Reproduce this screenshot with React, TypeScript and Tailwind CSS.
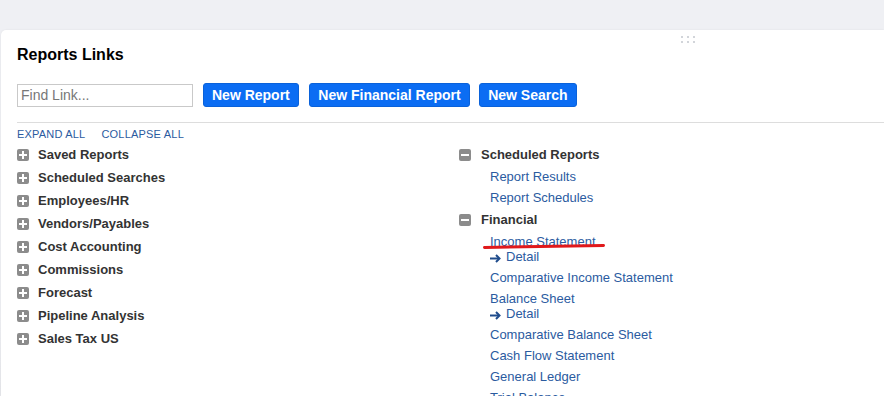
import React from "react";

function Box({ minus }: { minus?: boolean }) {
  return (
    <span className="relative inline-block w-[12px] h-[12px] rounded-[2px] bg-[#8c8c8c] shrink-0">
      <span className="absolute left-[2px] top-[5px] w-[8px] h-[2px] bg-white" />
      {!minus && <span className="absolute left-[5px] top-[2px] w-[2px] h-[8px] bg-white" />}
    </span>
  );
}

function Group({ label, minus }: { label: string; minus?: boolean }) {
  return (
    <div className="h-[23px] flex items-center">
      <Box minus={minus} />
      <span className={`${minus ? "ml-[10px]" : "ml-[9px]"} text-[13px] font-bold text-[#333333] leading-[23px]`}>{label}</span>
    </div>
  );
}

function Link({ label }: { label: string }) {
  return (
    <div className="h-[21px] leading-[21px] pl-[31px] text-[13px] text-[#2b5b9f]">{label}</div>
  );
}

function Detail() {
  return (
    <div className="h-[21px] mt-[-6px] flex items-center pl-[31px] text-[13px] text-[#2b5b9f]">
      <svg width="11" height="9" viewBox="0 0 11 9" className="mt-[3px]">
        <path d="M0 4.5 H9" stroke="#1f4c8c" strokeWidth="2" />
        <path d="M6 1 L9.5 4.5 L6 8" stroke="#1f4c8c" strokeWidth="2" fill="none" />
      </svg>
      <span className="ml-[5px]">Detail</span>
    </div>
  );
}

export default function App() {
  const left = [
    "Saved Reports",
    "Scheduled Searches",
    "Employees/HR",
    "Vendors/Payables",
    "Cost Accounting",
    "Commissions",
    "Forecast",
    "Pipeline Analysis",
    "Sales Tax US",
  ];
  return (
    <div className="w-[884px] h-[396px] overflow-hidden bg-gradient-to-b from-[#eff0f4] from-[80%] to-[#e7e8ec] pt-[30px] pl-px font-['Liberation_Sans',Arial,sans-serif]">
      <div className="relative bg-white rounded-tl-[5px] h-[366px] pl-[16px] pt-[15px] shadow-[0_0_2px_rgba(0,0,0,0.08)]">
        <div className="absolute left-[680px] top-[6px] grid grid-cols-3 gap-x-[4px] gap-y-[3px]">
          {[0, 1, 2, 3, 4, 5].map((i) => (
            <span key={i} className="w-[2px] h-[2px] bg-[#d2d5da]" />
          ))}
        </div>
        <h1 className="text-[16px] font-bold leading-[20px] text-black">Reports Links</h1>
        <div className="mt-[18px] flex items-center h-[24px]">
          <input
            placeholder="Find Link..."
            className="w-[176px] h-[23px] border border-[#c9c9c9] px-[3px] text-[14px] text-[#333] placeholder:text-[#777] outline-none"
          />
          <button className="ml-[10px] h-[24px] px-[8px] rounded-[3px] bg-[#0b6df3] border border-[#0a62da] text-white text-[14px] font-bold leading-none">
            New Report
          </button>
          <button className="ml-[10px] h-[24px] px-[8.5px] rounded-[3px] bg-[#0b6df3] border border-[#0a62da] text-white text-[14px] font-bold leading-none">
            New Financial Report
          </button>
          <button className="ml-[8.5px] h-[24px] px-[8.5px] rounded-[3px] bg-[#0b6df3] border border-[#0a62da] text-white text-[14px] font-bold leading-none">
            New Search
          </button>
        </div>
        <div className="mt-[15px] h-px bg-[#dddddd]" />
        <div className="mt-[5px] flex text-[11px] tracking-[0.2px] leading-[13px] text-[#2b5b9f]">
          <span>EXPAND ALL</span>
          <span className="ml-[16px]">COLLAPSE ALL</span>
        </div>
        <div className="mt-[2px] flex">
          <div className="w-[442px]">
            {left.map((l) => (
              <Group key={l} label={l} />
            ))}
          </div>
          <div className="relative">
            <Group label="Scheduled Reports" minus />
            <Link label="Report Results" />
            <Link label="Report Schedules" />
            <Group label="Financial" minus />
            <Link label="Income Statement" />
            <Detail />
            <Link label="Comparative Income Statement" />
            <Link label="Balance Sheet" />
            <Detail />
            <Link label="Comparative Balance Sheet" />
            <Link label="Cash Flow Statement" />
            <Link label="General Ledger" />
            <Link label="Trial Balance" />
            <svg className="absolute left-[24px] top-[100px]" width="122" height="7" viewBox="0 0 122 7">
              <path d="M1.5 4.5 Q60 3.5 120.5 2.5" stroke="#e0191b" strokeWidth="3" strokeLinecap="round" fill="none" />
            </svg>
          </div>
        </div>
      </div>
    </div>
  );
}
